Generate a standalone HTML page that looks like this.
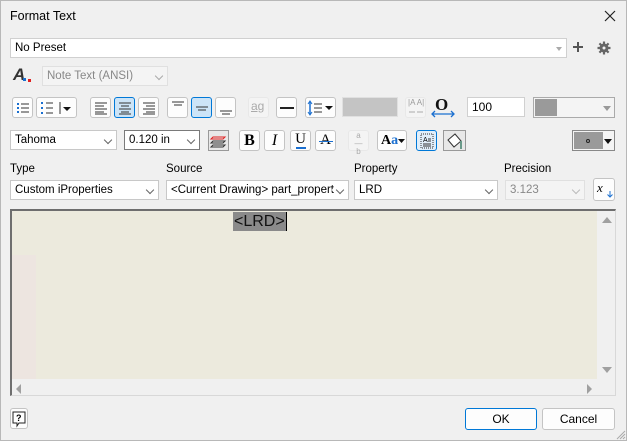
<!DOCTYPE html>
<html><head><meta charset="utf-8"><style>
*{box-sizing:border-box}
body{margin:0;width:627px;height:441px;background:#f0f0f0;font-family:"Liberation Sans",Tahoma,sans-serif;font-size:12px;color:#000;position:relative;overflow:hidden}
.a{position:absolute}
.frame{left:0;top:0;width:627px;height:441px;border:1px solid #b8b8b8}
.combo{position:absolute;background:#fff;border:1px solid #c8c8c8;height:20px;line-height:18px;padding-left:4px;font-size:11.5px;white-space:nowrap;overflow:hidden}
.combo.dk{border-color:#7a7a7a}
.chev{position:absolute;right:5px;top:6px;width:6px;height:6px;border-right:1px solid #666;border-bottom:1px solid #666;transform:rotate(45deg)}
.btn{position:absolute;background:#fdfdfd;border:1px solid #c4c4c4;border-radius:3px;height:21px;width:21px}
.sel{background:#cce4f7;border-color:#0078d7}
.lbl{position:absolute;font-size:11.5px}
svg{position:absolute;left:0;top:0}
</style></head><body>
<div class="a frame"></div>
<div class="a" style="left:10px;top:9px;font-size:12.5px">Format Text</div>
<svg style="left:604px;top:10px" width="12" height="12"><path d="M1 1L11 11M11 1L1 11" stroke="#222" stroke-width="1.2"/></svg>

<div class="combo" style="left:10px;top:38px;width:557px;border-color:#d0d0d0">No Preset<div class="a" style="right:4px;top:8px;border:3px solid transparent;border-top:4px solid #aaa"></div></div>
<svg style="left:572px;top:41px" width="12" height="12"><path d="M6 1V11M1 6H11" stroke="#555" stroke-width="2"/></svg>
<svg style="left:597px;top:41px" width="14" height="14"><path d="M7 0.5V13.5M0.5 7H13.5M2.4 2.4L11.6 11.6M11.6 2.4L2.4 11.6" stroke="#666" stroke-width="2.2"/><circle cx="7" cy="7" r="4.5" fill="#666"/><circle cx="7" cy="7" r="1.5" fill="#f0f0f0"/></svg>

<div class="a" style="left:13px;top:65px;font-size:17px;font-weight:bold;color:#333;font-family:'Liberation Sans',sans-serif;font-style:italic">A</div>
<div class="a" style="left:23px;top:78px;width:3px;height:3px;background:#1a6fd0"></div><div class="a" style="left:28px;top:79px;width:3px;height:3px;background:#e02020"></div>
<div class="combo" style="left:42px;top:66px;width:126px;background:#f4f4f4;border-color:#e0e0e0;color:#888">Note Text (ANSI)<div class="chev" style="border-color:#aaa"></div></div>

<!-- row 1 -->
<div class="btn" style="left:12px;top:97px"><svg width="20" height="20"><g fill="#1a6fd0"><rect x="4" y="5" width="2" height="2"/><rect x="4" y="9" width="2" height="2"/><rect x="4" y="13" width="2" height="2"/></g><path d="M8 6H16M8 10H16M8 14H16" stroke="#333"/></svg></div>
<div class="btn" style="left:36px;top:97px;width:41px"><svg width="40" height="20"><g fill="#1a6fd0"><rect x="4" y="4" width="2" height="2"/><rect x="4" y="9" width="2" height="2"/><rect x="4" y="14" width="2" height="2"/></g><path d="M9 5H16M9 10H16M9 15H16M23 4V16" stroke="#333"/><path d="M26 9H34L30 13Z" fill="#111"/></svg></div>
<div class="btn" style="left:90px;top:97px"><svg width="20" height="20"><path d="M4 5H16M4 8H13M4 11H16M4 14H13M4 16H16" stroke="#333"/></svg></div>
<div class="btn sel" style="left:114px;top:97px"><svg width="20" height="20"><path d="M4 5H16M6 8H14M4 11H16M6 14H14M4 16H16" stroke="#333"/></svg></div>
<div class="btn" style="left:138px;top:97px"><svg width="20" height="20"><path d="M4 5H16M7 8H16M4 11H16M7 14H16M4 16H16" stroke="#333"/></svg></div>
<div class="btn" style="left:167px;top:97px"><svg width="20" height="20"><path d="M4 4H16M6 7H14" stroke="#333"/></svg></div>
<div class="btn sel" style="left:191px;top:97px"><svg width="20" height="20"><path d="M4 9H16M6 12H14" stroke="#333"/></svg></div>
<div class="btn" style="left:215px;top:97px"><svg width="20" height="20"><path d="M4 13H16M6 16H14" stroke="#333"/></svg></div>
<div class="btn" style="left:248px;top:97px;border-color:#e8e8e8;background:#f4f4f4"><div class="a" style="left:2px;top:1px;color:#aaa;font-size:12px;text-decoration:underline">ag</div></div>
<div class="btn" style="left:276px;top:97px"><svg width="20" height="20"><path d="M3 10H17" stroke="#222" stroke-width="2"/></svg></div>
<div class="btn" style="left:305px;top:97px;width:31px"><svg width="30" height="20"><path d="M4 4V16" stroke="#1a6fd0" stroke-width="1.5"/><path d="M2 6L4 3L6 6M2 14L4 17L6 14" stroke="#1a6fd0" fill="none"/><path d="M8 6H16M8 10H16M8 14H16" stroke="#333"/><path d="M19 8H27L23 12Z" fill="#111"/></svg></div>
<div class="a" style="left:342px;top:97px;width:56px;height:20px;background:#c4c4c4;border:1px solid #e0e0e0"></div>
<div class="btn" style="left:405px;top:97px;border-color:#e8e8e8;background:#f4f4f4"><div class="a" style="left:2px;top:0px;color:#999;font-size:8px">|A A|</div><svg width="20" height="20"><path d="M3 14H9M11 14H17" stroke="#aaa"/></svg></div>
<div class="a" style="left:435px;top:95px;font-size:17px;font-weight:bold;font-family:'Liberation Serif',serif;color:#111">O</div>
<svg style="left:431px;top:110px" width="24" height="8"><path d="M1 4H23M4 1L1 4L4 7M20 1L23 4L20 7" stroke="#1a6fd0" fill="none" stroke-width="1.3"/></svg>
<div class="combo" style="left:467px;top:97px;width:58px;font-size:12px;border-color:#d0d0d0">100</div>
<div class="a" style="left:533px;top:97px;width:82px;height:21px;background:#f4f4f4;border:1px solid #aaa"><div class="a" style="left:1px;top:1px;width:22px;height:17px;background:#9a9a9a"></div><div class="a" style="right:3px;top:8px;border:4px solid transparent;border-top:5px solid #999"></div></div>

<!-- row 2 -->
<div class="combo" style="left:10px;top:130px;width:107px">Tahoma<div class="chev"></div></div>
<div class="combo dk" style="left:124px;top:130px;width:76px">0.120 in<div class="chev"></div></div>
<div class="btn" style="left:208px;top:130px;border-color:#999;background:#e8e8e8;border-radius:0"><svg width="20" height="20"><path d="M4 6H16L14 8H2Z" fill="none" stroke="#e02020"/><path d="M4 10H16L14 12H2ZM4 14H16L14 16H2Z" fill="none" stroke="#333"/></svg></div>
<div class="btn" style="left:239px;top:130px;font-weight:bold;font-family:'Liberation Serif',serif;font-size:16px;text-align:center;line-height:19px">B</div>
<div class="btn" style="left:264px;top:130px;font-style:italic;font-family:'Liberation Serif',serif;font-size:16px;text-align:center;line-height:19px">I</div>
<div class="btn" style="left:290px;top:130px;font-family:'Liberation Serif',serif;font-size:15px;text-align:center;line-height:17px">U<div class="a" style="left:5px;top:16px;width:10px;height:1.5px;background:#1a6fd0"></div></div>
<div class="btn" style="left:315px;top:130px;font-family:'Liberation Serif',serif;font-size:15px;text-align:center;line-height:19px">A<div class="a" style="left:3px;top:10px;width:14px;height:1px;background:#1a6fd0"></div></div>
<div class="btn" style="left:348px;top:130px;border-color:#e8e8e8;background:#f4f4f4;color:#aaa;font-size:8px;text-align:center;line-height:8px;padding-top:1px">a<br>—<br>b</div>
<div class="btn" style="left:377px;top:130px;width:30px"><div class="a" style="left:3px;top:2px;font-weight:bold;font-family:'Liberation Serif',serif;font-size:14px">A<span style="color:#1a6fd0">a</span></div><svg width="30" height="20"><path d="M20 8H27L23.5 12Z" fill="#111"/></svg></div>
<div class="btn sel" style="left:416px;top:130px;background:#e0eefa"><svg width="20" height="20"><rect x="4" y="3" width="12" height="14" fill="none" stroke="#333" stroke-dasharray="1 1"/><text x="6" y="11" font-size="7" font-family="Liberation Sans">A</text><path d="M11 8H14M11 10H14M6 13H14M6 15H14" stroke="#333"/></svg></div>
<div class="btn" style="left:443px;top:130px;width:23px;border-color:#999;background:#e8e8e8;border-radius:0"><svg width="22" height="20"><path d="M4 9L11 3L17 10L10 16Z" fill="#fff" stroke="#333"/><path d="M17 10V18" stroke="#6a9a8a" stroke-width="2"/></svg></div>
<div class="a" style="left:572px;top:130px;width:43px;height:21px;background:#f4f4f4;border:1px solid #888"><div class="a" style="left:1px;top:1px;width:29px;height:17px;background:#9a9a9a"></div><div class="a" style="left:13px;top:8px;width:4px;height:4px;border:1px solid #222;border-radius:50%"></div><div class="a" style="right:2px;top:8px;border:4px solid transparent;border-top:5px solid #111"></div></div>

<!-- labels row -->
<div class="lbl" style="left:10px;top:163px">Type</div>
<div class="lbl" style="left:166px;top:163px">Source</div>
<div class="lbl" style="left:354px;top:163px">Property</div>
<div class="lbl" style="left:504px;top:163px">Precision</div>
<div class="combo" style="left:10px;top:180px;width:149px">Custom iProperties<div class="chev"></div></div>
<div class="combo" style="left:166px;top:180px;width:183px;padding-right:16px">&lt;Current Drawing&gt; part_propert<div class="chev" style="background:#fff;box-shadow:0 0 0 3px #fff"></div></div>
<div class="combo" style="left:354px;top:180px;width:144px">LRD<div class="chev"></div></div>
<div class="combo" style="left:505px;top:180px;width:80px;background:#f4f4f4;border-color:#e0e0e0;color:#888">3.123<div class="chev" style="border-color:#bbb"></div></div>
<div class="btn" style="left:593px;top:178px;width:22px;height:23px"><div class="a" style="left:3px;top:1px;font-family:'Liberation Serif',serif;font-style:italic;font-size:13px">x</div><svg width="21" height="22"><path d="M16 12V18M13.5 15.5L16 18L18.5 15.5" stroke="#1a6fd0" fill="none"/></svg></div>

<!-- editor -->
<div class="a" style="left:10px;top:209px;width:606px;height:187px;border:1px solid #d8d8d8;border-top:2px solid #6e6e6e;border-left:2px solid #6e6e6e;background:#f0f0f0">
  <div class="a" style="left:0;top:0;width:585px;height:168px;background:#eceadd"></div>
  <div class="a" style="left:0;top:44px;width:24px;height:124px;background:#ede5e0"></div>
  <div class="a" style="left:221px;top:1px;width:53px;height:19px;background:#8a8a8a"></div>
  <div class="a" style="left:222px;top:1px;font-size:16px;line-height:19px;color:#111">&lt;LRD&gt;</div>
  <div class="a" style="left:274px;top:1px;width:1px;height:19px;background:#000"></div>
  <div class="a" style="left:590px;top:6px;border:5px solid transparent;border-bottom:6px solid #a0a0a0;border-top:0"></div>
  <div class="a" style="left:590px;top:156px;border:5px solid transparent;border-top:6px solid #a0a0a0;border-bottom:0"></div>
  <div class="a" style="left:4px;top:173px;border:5px solid transparent;border-right:5px solid #a0a0a0;border-left:0"></div>
  <div class="a" style="left:575px;top:173px;border:5px solid transparent;border-left:5px solid #a0a0a0;border-right:0"></div>
</div>

<!-- bottom -->
<div class="btn" style="left:10px;top:408px;width:18px;height:21px"><svg width="17" height="20"><path d="M2 3H14V14H8L6 17V14H2Z" fill="#fff" stroke="#222"/><text x="5" y="12" font-size="9" font-family="Liberation Sans" font-weight="bold">?</text></svg></div>
<div class="a" style="left:465px;top:408px;width:72px;height:22px;border:1px solid #0078d7;border-radius:3px;background:#fdfdfd;text-align:center;line-height:20px">OK</div>
<div class="a" style="left:542px;top:408px;width:73px;height:22px;border:1px solid #c4c4c4;border-radius:3px;background:#fdfdfd;text-align:center;line-height:20px">Cancel</div>
<svg style="left:615px;top:429px" width="11" height="11"><path d="M10 2L2 10M10 5L5 10M10 8L8 10" stroke="#aaa"/></svg>
</body></html>
